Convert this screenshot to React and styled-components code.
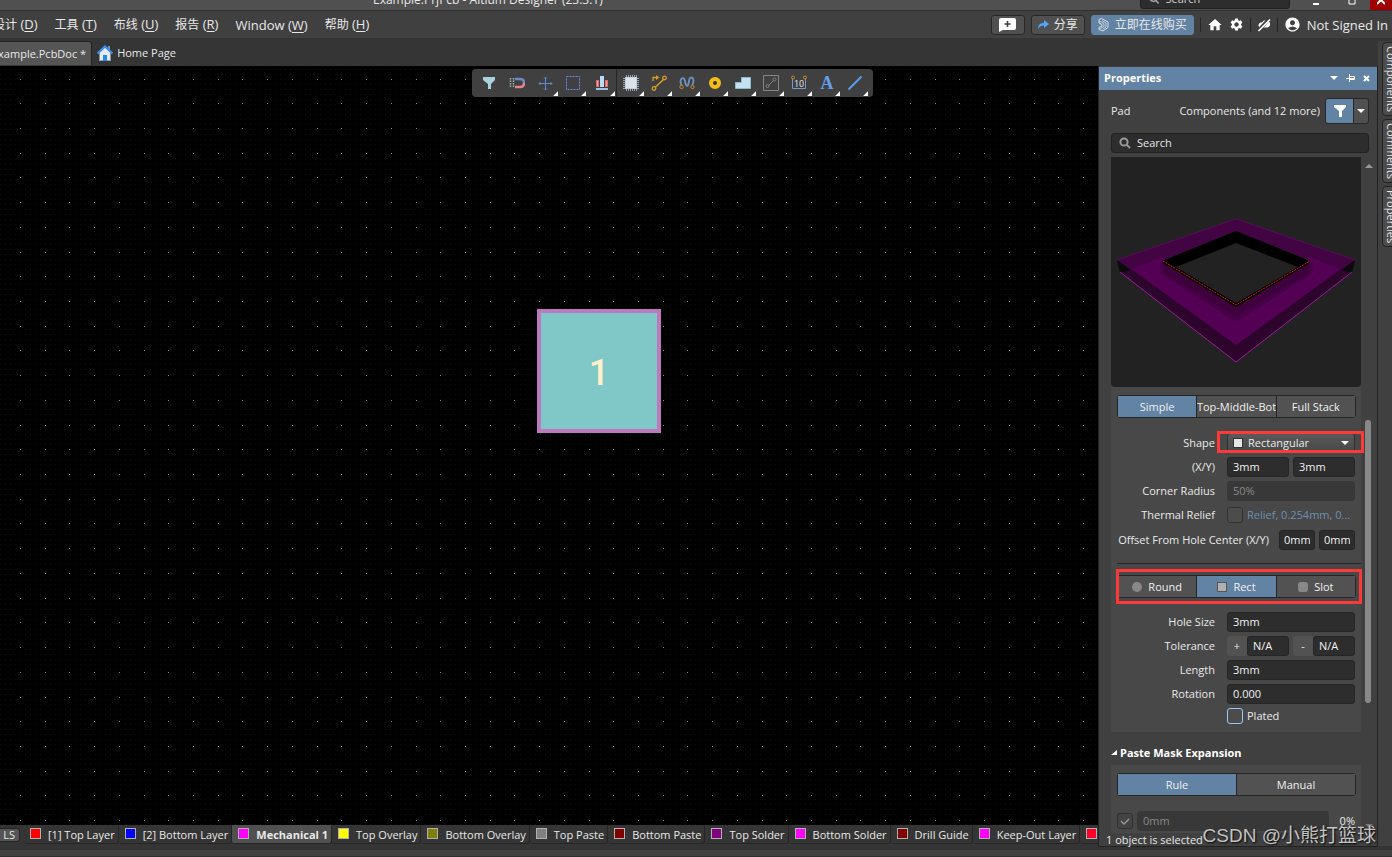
import styled, { createGlobalStyle, css } from "styled-components";
import { MdHome, MdSettings, MdAccountCircle } from "react-icons/md";

const GlobalStyle = createGlobalStyle`
    * { box-sizing: border-box; }
    body {
        margin: 0;
        background: #353535;
        color: #e8e8e8;
        font-family: "Open Sans", "Noto Sans", "Noto Sans CJK SC", sans-serif;
        font-size: 11px;
        line-height: 16px;
        overflow: hidden;
    }
    button, input, select { font: inherit; color: inherit; }
    button { cursor: pointer; }
`

const Window = styled.div`
    display: flex;
    flex-direction: column;
    height: 100vh;
`

/* ---------- title and menu ---------- */

const TitleBar = styled.header`
    display: flex;
    flex: none;
    align-items: center;
    justify-content: flex-end;
    height: 27px;
    margin-top: -16px;
    background: #505050;
    border-bottom: 1px solid #303030;
`

const TitleText = styled.div`
    flex: 1;
    padding: 0 0 0 373px;
    font-size: 12px;
    white-space: nowrap;
    margin-bottom: -5px;
`

const TitleSearch = styled.label`
    display: flex;
    align-items: center;
    gap: 6px;
    width: 150px;
    height: 22px;
    margin: 0 8px -1px 0;
    padding: 2px 8px 0;
    background: #2d2d2d;
    border: 1px solid #202020;
    border-radius: 3px;

    input {
        width: 100%;
        padding: 0;
        background: none;
        border: 0;
        outline: 0;
    }
    input::placeholder { color: #d0d0d0; }
`

const WindowButton = styled.button`
    width: ${p => p.$close ? 22 : 36}px;
    height: 26px;
    padding: 8px 0 0;
    color: #fff;
    border: 0;
    background: ${p => p.$close ? "#a00000" : "none"};
    overflow: hidden;
`

const MenuBar = styled.nav`
    display: flex;
    flex: none;
    align-items: center;
    height: 27px;
    background: #404040;
    font-size: 13px;
    overflow: hidden;
`

const Menus = styled.div`
    display: flex;
    flex: 1;
    gap: 17px;
    margin-left: -7px;
`

const MenuItem = styled.button`
    padding: 0;
    background: none;
    border: 0;
    white-space: nowrap;

    u { text-underline-offset: 2px; }
`

const MenuName = styled.span`
    font-size: ${p => p.$latin ? 13 : 12}px;
`

const AccountTools = styled.div`
    display: flex;
    align-items: center;
    gap: 6px;
    padding-right: 4px;
`

const BarButton = styled.button`
    display: flex;
    align-items: center;
    justify-content: center;
    gap: 5px;
    height: 20px;
    padding: 0 6px;
    min-width: 34px;
    background: ${p => p.$blue ? "#6283a3" : "#505050"};
    border: 1px solid ${p => p.$blue ? "#6283a3" : "#272727"};
    border-radius: 3px;
    font-size: 12px;
    white-space: nowrap;
`

const IconButton = styled.button`
    display: flex;
    padding: 0;
    background: none;
    border: 0;
    color: #fff;
`

const Rule = styled.span`
    width: 1px;
    height: 14px;
    background: #252525;
`

const SignIn = styled.button`
    display: flex;
    align-items: center;
    gap: 6px;
    padding: 0;
    background: none;
    border: 0;
    white-space: nowrap;
`

/* ---------- frame ---------- */

const Body = styled.div`
    display: flex;
    flex: 1;
    min-height: 0;
`

const Main = styled.div`
    display: flex;
    flex-direction: column;
    flex: 1;
    min-width: 0;
`

const DocTabs = styled.div`
    display: flex;
    flex: none;
    align-items: flex-end;
    height: 28px;
    padding-bottom: 1px;
`

const DocTab = styled.button`
    display: flex;
    align-items: center;
    gap: 4px;
    height: 24px;
    padding: 0 5px;
    border: 0;
    background: none;
    white-space: nowrap;
    ${p => p.$active && css`
        margin-left: -14px;
        background: #555555;
        border: 1px solid #222;
        border-bottom: 0;
        border-radius: 0 3px 0 0;
    `}
`

const Work = styled.div`
    display: flex;
    flex: 1;
    min-height: 0;
`

const Editor = styled.main`
    display: flex;
    flex-direction: column;
    flex: 1;
    min-width: 0;
`

const Stage = styled.div`
    position: relative;
    flex: 1;
    min-height: 0;
    background: #000;
    overflow: hidden;

    > svg { display: block; }
`

const Toolbar = styled.div`
    position: absolute;
    top: 3px;
    left: 43%;
    display: flex;
    align-items: center;
    height: 28px;
    padding: 0 4px 0 3px;
    background: #404040;
    border-radius: 4px;
`

const Tool = styled.button`
    position: relative;
    display: grid;
    place-items: center;
    width: ${p => p.$split ? 30 : 28}px;
    height: 28px;
    padding: 0;
    background: none;
    border: 0;
    border-right: ${p => p.$split ? "1px solid #272727" : 0};

    ${p => p.$menu && css`
        &::after {
            content: "";
            position: absolute;
            right: 1px;
            bottom: 1px;
            width: 5px;
            height: 5px;
            background: #fff;
            clip-path: polygon(100% 0, 100% 100%, 0 100%);
        }
    `}
`

const LayerBar = styled.div`
    display: flex;
    flex: none;
    align-items: flex-start;
    height: 25px;
    overflow: hidden;
`

const LayerSet = styled.button`
    flex: none;
    width: 20px;
    height: 14px;
    margin: 3px 4px 0 0;
    padding: 0 4px 0 0;
    line-height: 12px;
    text-align: right;
    background: #555;
    border: 1px solid #252525;
    border-left: 0;
    border-radius: 0 3px 3px 0;
`

const LayerTab = styled.button`
    display: flex;
    flex: none;
    align-items: center;
    gap: 7px;
    height: 19px;
    padding: 2px 3px 0 6px;
    background: ${p => p.$active ? "#505050" : "#353535"};
    font-weight: ${p => p.$active ? 700 : 400};
    border: solid #252525;
    border-width: 0 1px 1px 0;
    border-radius: 0 0 3px 3px;
    white-space: nowrap;
`

const Swatch = styled.span`
    width: 11px;
    height: 11px;
    margin-bottom: 3px;
    background: ${p => p.$color};
    border: 1px solid #b0b0b0;
`

const StatusBar = styled.footer`
    flex: none;
    height: 7px;
    background: #404040;
    border-bottom: 1px solid #303030;
`

/* ---------- side rail ---------- */

const Rail = styled.aside`
    display: flex;
    flex-direction: column;
    align-items: flex-start;
    gap: 3px;
    width: 14px;
    margin: 3px 0 4px;
    padding: 1px 0 0 4px;
    background: #404040;
    overflow: hidden;
`

const RailTab = styled.button`
    flex: none;
    width: 18px;
    padding: 3px 0;
    background: #4c4c4c;
    border: 1px solid #222;
    border-radius: 4px;
    line-height: 14px;
    white-space: nowrap;
    writing-mode: vertical-rl;
`

/* ---------- properties panel ---------- */

const Panel = styled.section`
    display: flex;
    flex-direction: column;
    flex: none;
    width: 280px;
    margin-bottom: 3px;
    padding-top: 1px;
    background: #404040;
    border: solid #222;
    border-width: 0 1px 1px;
`

const PanelHead = styled.div`
    display: flex;
    flex: none;
    align-items: center;
    gap: 8px;
    height: 23px;
    padding: 0 7px 1px 5px;
    background: #6283a3;
    color: #fff;

    h2 {
        flex: 1;
        margin: 0;
        font-size: 11px;
    }
`

const FilterRow = styled.div`
    display: flex;
    align-items: center;
    padding: 8px 8px 0 12px;
    height: 34px;

    > :nth-child(2) {
        margin-left: auto;
        margin-right: 5px;
    }
`

const FilterButton = styled.button`
    display: grid;
    place-items: center;
    width: ${p => p.$arrow ? 15 : 29}px;
    height: 26px;
    padding: 0;
    background: ${p => p.$arrow ? "#505050" : "#6283a3"};
    border: 1px solid #272727;
    border-left-width: ${p => p.$arrow ? 0 : 1}px;
    border-radius: ${p => p.$arrow ? "0 3px 3px 0" : "3px 0 0 3px"};
`

const SearchBox = styled.label`
    display: flex;
    flex: none;
    align-items: center;
    gap: 6px;
    height: 20px;
    margin: 9px 8px 4px 12px;
    padding: 0 7px;
    background: #2d2d2d;
    border: 1px solid #222;
    border-radius: 3px;

    input {
        flex: 1;
        min-width: 0;
        padding: 0;
        background: none;
        border: 0;
        outline: 0;
    }
    input::placeholder { color: #e6e6e6; }
`

const ScrollArea = styled.div`
    display: flex;
    flex: 1;
    min-height: 0;
    padding-left: 12px;
`

/* the extra 4px leaves room for outlines that reach past the groups */
const ScrollContent = styled.div`
    flex: 1;
    min-width: 0;
    margin-right: -4px;
    padding-right: 4px;
    overflow: hidden;
`

const ScrollTrack = styled.div`
    display: flex;
    flex-direction: column;
    align-items: center;
    justify-content: space-between;
    width: 16px;
    padding: 7px 4px 5px 3px;
`

const Thumb = styled.div`
    flex: none;
    width: 6px;
    height: 283px;
    margin: 252px 2px auto 0;
    background: #888;
    border-radius: 3px;
`

const Preview = styled.div`
    height: 230px;
    background: #222;
    border-radius: 0 0 4px 4px;

    svg { display: block; margin: 0 auto; }
`

const Group = styled.div`
    padding: 8px 6px;
    background: #484848;
    border-radius: 0 0 3px 3px;
`

const Segments = styled.div`
    position: relative;
    display: flex;
    height: 23px;
    border: 1px solid #252525;
    border-radius: 3px;
    margin-right: -1px;
`

const Segment = styled.button`
    display: flex;
    flex: 1 1 0;
    align-items: center;
    justify-content: center;
    gap: 6px;
    min-width: 0;
    padding: 0;
    overflow: hidden;
    white-space: nowrap;
    color: #f0f0f0;
    background: ${p => p.$active ? "#6283a3" : "#525252"};
    border: 0;
    & + & { border-left: 1px solid #252525; }
`

const HoleMark = styled.span`
    width: 10px;
    height: 10px;
    background: #888;
    border-radius: ${p => p.$radius}px;
    ${p => p.$framed && css`
        background: #b0b0b0;
        border: 1px solid #555;
    `}
`

const Form = styled.div`
    display: grid;
    gap: 4px;
    padding-top: ${p => p.$top}px;
`

const Row = styled.div`
    position: relative;
    display: grid;
    grid-template-columns: ${p => p.$wideLabel ? "1fr 76px" : "1fr 128px"};
    column-gap: ${p => p.$wideLabel ? 10 : 12}px;
    align-items: center;
    min-height: ${p => p.$low ? 16 : 20}px;

    > label, > span:first-child { text-align: right; white-space: nowrap; }
`

const Fields = styled.div`
    display: flex;
    align-items: center;
    gap: 4px;
    min-width: 0;
`

const TextInput = styled.input`
    flex: 1 1 0;
    width: 100%;
    min-width: 0;
    height: 20px;
    padding: 0 ${p => p.$tight ? 4 : 5}px 1px;
    color: #f0f0f0;
    background: #2d2d2d;
    border: 1px solid #252525;
    border-radius: 3px;
    outline: 0;

    &:disabled {
        color: #888;
        background: #383838;
        border-color: #383838;
    }
`

const ShapeSelect = styled.select`
    width: 100%;
    height: 20px;
    padding: 0 20px;
    appearance: none;
    background: linear-gradient(#5a5a5a, #484848);
    border: 1px solid #303030;
    border-radius: 3px;
    outline: 0;
`

const SelectWrap = styled.div`
    position: relative;

    > span {
        position: absolute;
        left: 6px;
        top: 5px;
        width: 10px;
        height: 10px;
        background: #e6e6e6;
        border: 1px solid #333;
    }
    > svg {
        position: absolute;
        right: 6px;
        top: 8px;
    }
`

const Highlight = styled.span`
    position: absolute;
    inset: ${p => p.$inset};
    border: 3px solid #ff3838;
    pointer-events: none;
`

const CheckBox = styled.input`
    flex: none;
    width: 16px;
    height: 16px;
    margin: 0;
    appearance: none;
    background: #4c4c4c;
    border: 1px solid ${p => p.$bright ? "#9ccaf5" : "#303030"};
    border-radius: 3px;

    &:checked {
        background: #444 url("data:image/svg+xml,%3Csvg xmlns='http://www.w3.org/2000/svg' viewBox='0 0 14 14'%3E%3Cpath d='M3 7l3 3 5-5' fill='none' stroke='%23999' stroke-width='1.3'/%3E%3C/svg%3E");
    }
`

const Relief = styled.a`
    overflow: hidden;
    color: #6f8fb0;
    text-decoration: none;
    text-overflow: ellipsis;
    white-space: nowrap;
    padding-right: 4px;
`

const Sign = styled.button`
    flex: none;
    width: 20px;
    height: 20px;
    padding: 0;
    background: #525252;
    border: 0;
    border-radius: 3px 0 0 3px;
    margin-right: -4px;
`

const Percent = styled.span`
    width: 22px;
    text-align: right;
`

const Divider = styled.hr`
    height: 1px;
    margin: 13px -6px 11px 0;
    background: #252525;
    border: 0;
`

const SectionTitle = styled.h3`
    display: flex;
    align-items: center;
    gap: 3px;
    height: 33px;
    margin: 0;
    padding-top: 8px;
    font-size: 11px;
    color: #fff;
`

const Selected = styled.div`
    flex: none;
    height: 13px;
    padding-left: 7px;
    line-height: 13px;
`

const Watermark = styled.div`
    position: absolute;
    right: 16px;
    bottom: 7px;
    color: rgba(225, 225, 225, 0.85);
    font-family: "Liberation Sans", "Noto Sans CJK SC", sans-serif;
    font-size: 19px;
    line-height: 28px;
    text-shadow: 1px 1px 2px #000;
    white-space: nowrap;
`

/* ---------- drawings ---------- */

const SearchIcon = () => (
    <svg width="12" height="12" viewBox="0 0 12 12" fill="none" stroke="#999" strokeWidth="2">
        <circle cx="5" cy="5" r="3.6" />
        <path d="M7.6 7.6l3.4 3.4" />
    </svg>
)

const Arrow = ({ color = "#fff", up }) => (
    <svg width="8" height="4" viewBox="0 0 8 4" fill={color}>
        <path d={up ? "M0 4l4-4 4 4z" : "M0 0h8l-4 4z"} />
    </svg>
)

const Funnel = ({ color = "#fff" }) => (
    <svg width="14" height="14" viewBox="0 0 14 14" fill={color}>
        <path d="M1 1h12v2L9 7v6H6V7L1 3z" />
    </svg>
)

const CommentIcon = () => (
    <svg width="17" height="14" viewBox="0 0 17 14">
        <path d="M2 0h13q2 0 2 2v8q0 2-2 2H4l-4 2V2q0-2 2-2z" fill="#fff" />
        <path d="M8.500 3v6M5.500 6h6" stroke="#404040" strokeWidth="1.600" />
    </svg>
)

const HouseIcon = () => (
    <svg width="16" height="16" viewBox="0 0 16 16">
        <path d="M11 1h2v5h-2z" fill="#7e93a8" />
        <path d="M2.500 7L8 2l5.500 5v9h-11z" fill="#e2ebf4" />
        <path d="M.5 8.500L8 1.500l7.500 7" fill="none" stroke="#3f8cf0" strokeWidth="2.200" />
        <path d="M6 10h4v6H6z" fill="#2a86f5" />
        <path d="M2 15.500h4m4 0h4" stroke="#8fa3b8" />
    </svg>
)

const ShareIcon = () => (
    <svg width="11" height="10" viewBox="0 0 11 10">
        <path d="M6 0l5 4-5 4V5.500C3 5.500 1.500 6.500 0 9c0-4 2-6 6-6z" fill="#4da6ff" />
    </svg>
)

const AltiumIcon = () => (
    <svg width="12" height="14" viewBox="0 0 12 14" fill="none" stroke="#d5dfe8" strokeWidth="1">
        <path d="M1 1.500L3.500.5 10 4v5.500l-5 3.500-4-1.500v-2L4 8V6.500L1 5z" />
        <path d="M1 3l5 2.500v3L1 11M4 2.500l4 2.500v4l-3.500 2.500" strokeWidth=".8" />
    </svg>
)

const OfflineIcon = () => (
    <svg width="14" height="14" viewBox="0 0 14 14">
        <path d="M2 9C.5 6 3 4 5 4.500 6 2 9 2 10 3l2 .5c2 2 1 5-1 6H5z" fill="#fff" />
        <path d="M1 13L12 1" stroke="#404040" strokeWidth="3.500" />
        <path d="M1.500 13L13 1.500" stroke="#fff" strokeWidth="1.600" />
    </svg>
)

const toolDrawings = {
    Filter: <path d="M2 2h12v3L10 9v5H7V9L2 5z" fill="#a9d3dc" />,
    Snap: <>
        <path d="M1.500 3v10M4.500 3v10" stroke="#9db8b8" strokeWidth="1.500" strokeDasharray="1.500 1" />
        <path d="M6 4h5q4 0 4 4" fill="none" stroke="#7088c4" strokeWidth="2.500" />
        <path d="M15 8q0 4-4 4H6" fill="none" stroke="#e38488" strokeWidth="2.500" />
    </>,
    Move: <>
        <path d="M8.500 2v13M2 8.500h13" stroke="#648ae0" />
        <path d="M7 3.500L8.500 2 10 3.500M7 13.500L8.500 15l1.500-1.500M3.500 7L2 8.500 3.500 10M13.500 7L15 8.500 13.500 10" fill="none" stroke="#648ae0" strokeWidth=".8" />
    </>,
    Select: <path d="M1.500 1.500h13v13h-13z" fill="none" stroke="#6388e8" strokeDasharray="2 1" />,
    Align: <>
        <path d="M2 5h3v7H2zM11 5h3v7h-3z" fill="#e5656c" />
        <path d="M3.500 6v5M12.500 6v5" stroke="#f0a0a4" />
        <path d="M6 1h4v11H6z" fill="#b8dcf2" />
        <path d="M2 14h12" stroke="#9ec3e6" strokeWidth="2" />
    </>,
    Component: <>
        <path d="M3.500 0v16M5.500 0v16M7.500 0v16M9.500 0v16M11.500 0v16M13.500 0v16M0 3.500h16M0 5.500h16M0 7.500h16M0 9.500h16M0 11.500h16M0 13.500h16" stroke="#94a6b4" />
        <path d="M2 2h12v12H2z" fill="#c4d0d8" />
        <path d="M3 3h10v10H3z" fill="#dde3e6" />
    </>,
    Route: <g fill="none" stroke="#d99a24" strokeWidth="1.300">
        <circle cx="3" cy="13.500" r="1.800" /><circle cx="13.500" cy="3" r="1.800" />
        <path d="M2 6V2.500h5" />
        <path d="M4.500 12l8-7.500" strokeWidth="1.600" />
        <path d="M5 0l3.500 2.500L5 5z" fill="#d99a24" stroke="none" />
    </g>,
    Tune: <>
        <path d="M3 11C-1 4 5 0 6 6s3 7 4 0 7-3 3 5" fill="none" stroke="#6e94c4" strokeWidth="1.800" />
        <circle cx="2.500" cy="12" r="1.700" fill="#404040" stroke="#c98a28" />
        <circle cx="13.500" cy="12" r="1.700" fill="#404040" stroke="#c98a28" />
    </>,
    Via: <circle cx="8" cy="8" r="4" fill="#333" stroke="#f3bf17" strokeWidth="4" />,
    Polygon: <path d="M.5 7.500h6v-5h9v11H.5z" fill="#c3e3ef" stroke="#8fbccc" />,
    Room: <>
        <path d="M.5.5h15v15H.5z" fill="none" stroke="#858585" />
        <path d="M5.500 10.500l5-5" stroke="#808080" />
        <circle cx="4.500" cy="11" r="1.500" fill="none" stroke="#808080" />
        <circle cx="11.500" cy="4.500" r="1.500" fill="none" stroke="#808080" />
    </>,
    Dimension: <>
        <path d="M1.500 4v9.500h13V4" fill="none" stroke="#739bd0" />
        <circle cx="2" cy="2.500" r="1.500" fill="none" stroke="#c98a28" />
        <circle cx="14" cy="2.500" r="1.500" fill="none" stroke="#c98a28" />
        <text x="8" y="12" fontFamily="Roboto, sans-serif" fontSize="9" textAnchor="middle" fill="#ddd">10</text>
    </>,
    Text: <text x="8" y="14" fontFamily="Liberation Serif, serif" fontSize="18" fontWeight="700" textAnchor="middle" fill="#62a0e8">A</text>,
    Line: <path d="M1.500 14.500l13-13" stroke="#5a9cf0" strokeWidth="2" />,
}

const noMenu = ["Filter", "Snap"]

const GRID = 24.72

const gridDots = () => {
    let d = ""
    for (let row = 0; row < 60; row++) {
        for (let col = 0; col < 120; col++) {
            d += `M${Math.round(20 + (col - 1) * GRID)} ${Math.round(12.5 + row * GRID)}h1v1h-1z`
        }
    }
    return d
}

const Board = () => (
    <svg width="100%" height="100%">
        <defs>
            <pattern id="fine" width="5" height="5" patternUnits="userSpaceOnUse">
                <path d="M0 3h1v1H0z" fill="#0d0d0d" />
            </pattern>
        </defs>
        <rect width="100%" height="100%" fill="url(#fine)" />
        <path d={gridDots()} fill="#858585" shapeRendering="crispEdges" />
        <rect x="537" y="243" width="124" height="124" fill="#bd79bd" />
        <rect x="541" y="247" width="116" height="116" fill="#80c7c7" />
        <text x="599" y="319" fontFamily="Roboto, sans-serif" fontSize="36" fontWeight="500" textAnchor="middle" fill="#fff0c8">1</text>
    </svg>
)

const PadModel = () => (
    <svg width="250" height="230" viewBox="0 0 250 230">
        <path d="M9 115l14-9 102 75 102-75 14 9-116 90z" fill="#2c042c" />
        <path d="M6 103l3 13 14-4zM244 103l-3 13-14-4z" fill="#0b0b0b" />
        <path d="M125 62L6 103l14 10 30-9 75-30 75 30 30 9 14-10z" fill="#430443" />
        <path d="M20 112l31-12 74 48 74-48 31 12-105 76z" fill="#540054" />
        <path d="M49 116l76 49 77-49v-12H49z" fill="#470047" />
        <path d="M52 104v12l73 43 74-43v-12z" fill="#3d003d" />
        <path d="M125 74L51 104l74 45 74-45z" fill="#000" />
        <path d="M125 86L65 110l60 36 62-36z" fill="#222" />
        <path d="M6 103l119-41 119 41" fill="none" stroke="#5a0c5a" />
        <path d="M9 115l116 90 116-90" fill="none" stroke="#9c1b9c" />
        <path d="M52 105l73 44 74-44" fill="none" stroke="#000" strokeWidth="2" />
        <path d="M52 104l73 44 74-44" fill="none" stroke="#e01818" strokeDasharray="2 1" />
    </svg>
)

/* ---------- data ---------- */

const menus = [["设计", "D"], ["工具", "T"], ["布线", "U"], ["报告", "R"], ["Window", "W"], ["帮助", "H"]]

const layers = [
    ["[1] Top Layer", "#ff0000"],
    ["[2] Bottom Layer", "#0000ff"],
    ["Mechanical 1", "#ff00ff"],
    ["Top Overlay", "#ffff00"],
    ["Bottom Overlay", "#808000"],
    ["Top Paste", "#808080"],
    ["Bottom Paste", "#800000"],
    ["Top Solder", "#800080"],
    ["Bottom Solder", "#ff00ff"],
    ["Drill Guide", "#800000"],
    ["Keep-Out Layer", "#ff00ff"],
    ["Drill Drawing", "#ff002a"],
]

const Properties = () => (
    <Panel>
        <PanelHead>
            <h2>Properties</h2>
            <IconButton aria-label="Panel menu"><Arrow /></IconButton>
            <IconButton aria-label="Pin">
                <svg width="9" height="8" viewBox="0 0 9 8" fill="none" stroke="#fff"><path d="M0 4.500h3M3.500 0v8M4 2.500h4.500v3H4M4 4.500h5" /></svg>
            </IconButton>
            <IconButton aria-label="Close panel">
                <svg width="7" height="7" viewBox="0 0 7 7" stroke="#fff" strokeWidth="2"><path d="M1 1l5 5M6 1L1 6" /></svg>
            </IconButton>
        </PanelHead>
        <FilterRow>
            <span>Pad</span>
            <span>Components (and 12 more)</span>
            <FilterButton aria-label="Filter"><Funnel /></FilterButton>
            <FilterButton $arrow aria-label="Filter options"><Arrow /></FilterButton>
        </FilterRow>
        <SearchBox>
            <SearchIcon />
            <input placeholder="Search" aria-label="Search properties" />
        </SearchBox>
        <ScrollArea>
            <ScrollContent>
                <Preview><PadModel /></Preview>
                <Group>
                    <Segments>
                        <Segment $active>Simple</Segment>
                        <Segment>Top-Middle-Bot</Segment>
                        <Segment>Full Stack</Segment>
                    </Segments>
                    <Form $top={15}>
                        <Row>
                            <label htmlFor="shape">Shape</label>
                            <SelectWrap>
                                <ShapeSelect id="shape"><option>Rectangular</option></ShapeSelect>
                                <span />
                                <Arrow />
                            </SelectWrap>
                            <Highlight $inset="-2px -9px 0 100px" />
                        </Row>
                        <Row>
                            <label htmlFor="size-x">(X/Y)</label>
                            <Fields>
                                <TextInput id="size-x" defaultValue="3mm" />
                                <TextInput aria-label="Size Y" defaultValue="3mm" />
                            </Fields>
                        </Row>
                        <Row>
                            <label htmlFor="radius">Corner Radius</label>
                            <TextInput id="radius" disabled defaultValue="50%" />
                        </Row>
                        <Row>
                            <label htmlFor="thermal">Thermal Relief</label>
                            <Fields>
                                <CheckBox type="checkbox" id="thermal" />
                                <Relief href="#relief">Relief, 0.254mm, 0....</Relief>
                            </Fields>
                        </Row>
                    </Form>
                    <Form $top={5}>
                        <Row $wideLabel>
                            <label htmlFor="offset-x">Offset From Hole Center (X/Y)</label>
                            <Fields>
                                <TextInput $tight id="offset-x" defaultValue="0mm" />
                                <TextInput $tight aria-label="Offset Y" defaultValue="0mm" />
                            </Fields>
                        </Row>
                    </Form>
                    <Divider />
                    <Segments>
                        <Segment><HoleMark $radius={5} />Round</Segment>
                        <Segment $active><HoleMark $radius={0} $framed />Rect</Segment>
                        <Segment><HoleMark $radius={3} />Slot</Segment>
                        <Highlight $inset="-7px -7px -7px -2px" />
                    </Segments>
                    <Form $top={14}>
                        <Row>
                            <label htmlFor="hole">Hole Size</label>
                            <TextInput id="hole" defaultValue="3mm" />
                        </Row>
                        <Row>
                            <label htmlFor="tol-plus">Tolerance</label>
                            <Fields>
                                <Sign>+</Sign>
                                <TextInput id="tol-plus" defaultValue="N/A" />
                                <Sign>-</Sign>
                                <TextInput aria-label="Minus tolerance" defaultValue="N/A" />
                            </Fields>
                        </Row>
                        <Row>
                            <label htmlFor="length">Length</label>
                            <TextInput id="length" defaultValue="3mm" />
                        </Row>
                        <Row>
                            <label htmlFor="rotation">Rotation</label>
                            <TextInput id="rotation" defaultValue="0.000" />
                        </Row>
                        <Row $low>
                            <span />
                            <Fields>
                                <CheckBox type="checkbox" id="plated" $bright />
                                <label htmlFor="plated">Plated</label>
                            </Fields>
                        </Row>
                    </Form>
                </Group>
                <SectionTitle>
                    <svg width="6" height="5" viewBox="0 0 6 5"><path d="M6 0v5H0z" fill="#fff" /></svg>
                    Paste Mask Expansion
                </SectionTitle>
                <Group>
                    <Segments>
                        <Segment $active>Rule</Segment>
                        <Segment>Manual</Segment>
                    </Segments>
                    <Form $top={15}>
                        <Fields>
                            <CheckBox type="checkbox" defaultChecked aria-label="Use expansion" />
                            <TextInput disabled defaultValue="0mm" aria-label="Expansion" />
                            <Percent>0%</Percent>
                        </Fields>
                    </Form>
                </Group>
            </ScrollContent>
            <ScrollTrack>
                <Arrow up color="#999" />
                <Thumb />
                <Arrow color="#777" />
            </ScrollTrack>
        </ScrollArea>
        <Selected>1 object is selected</Selected>
    </Panel>
)

const App = () => {
    return (
        <>
            <GlobalStyle />
            <Window>
                <TitleBar>
                    <TitleText>Example.PrjPcb - Altium Designer (23.3.1)</TitleText>
                    <TitleSearch>
                        <SearchIcon />
                        <input placeholder="Search" aria-label="Search" />
                    </TitleSearch>
                    <WindowButton aria-label="Minimize">
                        <svg width="8" height="10" viewBox="0 0 8 10"><path d="M1 9h6" stroke="#fff" strokeWidth="2" /></svg>
                    </WindowButton>
                    <WindowButton aria-label="Maximize">
                        <svg width="8" height="10" viewBox="0 0 8 10"><path d="M1 1h6v8H1z" stroke="#fff" fill="none" /></svg>
                    </WindowButton>
                    <WindowButton $close aria-label="Close">
                        <svg width="8" height="10" viewBox="0 0 8 10"><path d="M0 1l8 8M8 1L0 9" stroke="#fff" strokeWidth="2" /></svg>
                    </WindowButton>
                </TitleBar>
                <MenuBar>
                    <Menus>
                        {menus.map(([name, key]) => (
                            <MenuItem key={key}>
                                <MenuName $latin={name === "Window"}>{name}</MenuName> (<u>{key}</u>)
                            </MenuItem>
                        ))}
                    </Menus>
                    <AccountTools>
                        <BarButton aria-label="Comment"><CommentIcon /></BarButton>
                        <BarButton><ShareIcon />分享</BarButton>
                        <BarButton $blue><AltiumIcon />立即在线购买</BarButton>
                        <Rule />
                        <IconButton aria-label="Home"><MdHome size={16} /></IconButton>
                        <IconButton aria-label="Settings"><MdSettings size={15} /></IconButton>
                        <Rule />
                        <IconButton aria-label="Offline"><OfflineIcon /></IconButton>
                        <Rule />
                        <SignIn><MdAccountCircle size={17} color="#fff" />Not Signed In</SignIn>
                    </AccountTools>
                </MenuBar>
                <Body>
                    <Main>
                        <DocTabs>
                            <DocTab $active>Example.PcbDoc *</DocTab>
                            <DocTab><HouseIcon />Home Page</DocTab>
                        </DocTabs>
                        <Work>
                            <Editor>
                                <Stage>
                                    <Board />
                                    <Toolbar>
                                        {Object.entries(toolDrawings).map(([name, drawing]) => (
                                            <Tool key={name} aria-label={name} $menu={!noMenu.includes(name)} $split={name === "Align"}>
                                                <svg width="16" height="16" viewBox="0 0 16 16">{drawing}</svg>
                                            </Tool>
                                        ))}
                                    </Toolbar>
                                </Stage>
                                <LayerBar>
                                    <LayerSet>LS</LayerSet>
                                    {layers.map(([name, color], i) => (
                                        <LayerTab key={name} $active={i === 2}>
                                            <Swatch $color={color} />
                                            {name}
                                        </LayerTab>
                                    ))}
                                </LayerBar>
                            </Editor>
                            <Properties />
                        </Work>
                    </Main>
                    <Rail>
                        <RailTab>Components</RailTab>
                        <RailTab>Comments</RailTab>
                        <RailTab>Properties</RailTab>
                    </Rail>
                </Body>
                <StatusBar />
                <Watermark>CSDN @小熊打篮球</Watermark>
            </Window>
        </>
    )
}

export default App
